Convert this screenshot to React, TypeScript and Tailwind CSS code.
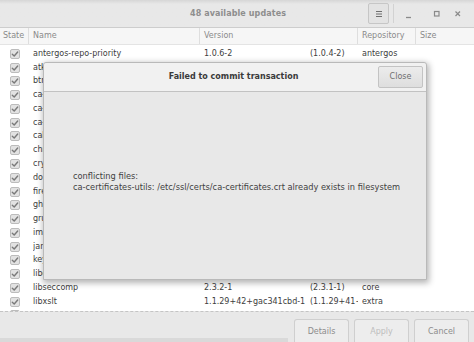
import React from "react";

type Pkg = { name: string; version: string; old: string; repo: string };

const packages: Pkg[] = [
  { name: "antergos-repo-priority", version: "1.0.6-2", old: "(1.0.4-2)", repo: "antergos" },
  { name: "atk", version: "2.26.1-1", old: "(2.26.0-1)", repo: "extra" },
  { name: "btrfs-progs", version: "4.13.3-1", old: "(4.13.2-1)", repo: "core" },
  { name: "ca-certificates", version: "20170307-2", old: "(20170307-1)", repo: "core" },
  { name: "ca-certificates-mozilla", version: "3.34-1", old: "(3.33-1)", repo: "core" },
  { name: "ca-certificates-utils", version: "20170307-2", old: "(20170307-1)", repo: "core" },
  { name: "calibre", version: "3.11.1-1", old: "(3.10.0-1)", repo: "community" },
  { name: "chromium", version: "62.0.3202.89-1", old: "(62.0.3202.75-1)", repo: "extra" },
  { name: "cryptsetup", version: "1.7.5-2", old: "(1.7.5-1)", repo: "core" },
  { name: "dosfstools", version: "4.1-2", old: "(4.1-1)", repo: "core" },
  { name: "firefox", version: "57.0-1", old: "(56.0.2-1)", repo: "extra" },
  { name: "ghc", version: "8.2.1-2", old: "(8.2.1-1)", repo: "community" },
  { name: "grub", version: "2.02-4", old: "(2.02-3)", repo: "core" },
  { name: "imagemagick", version: "7.0.7.10-1", old: "(7.0.7.8-1)", repo: "extra" },
  { name: "jansson", version: "2.10-2", old: "(2.10-1)", repo: "core" },
  { name: "keyutils", version: "1.5.10-2", old: "(1.5.10-1)", repo: "core" },
  { name: "libgcrypt", version: "1.8.1-2", old: "(1.8.1-1)", repo: "core" },
  { name: "libseccomp", version: "2.3.2-1", old: "(2.3.1-1)", repo: "core" },
  { name: "libxslt", version: "1.1.29+42+gac341cbd-1", old: "(1.1.29+41+gfe3a3f5-1)", repo: "extra" },
];

function Check() {
  return (
    <div className="w-[10px] h-[10px] rounded-[2px] border border-[#bcbcbc] bg-[#e2e2e2] flex items-center justify-center">
      <svg width="8" height="8" viewBox="0 0 8 8">
        <path d="M1.3 4.2 L3.2 6 L6.7 2" fill="none" stroke="#7a7a7a" strokeWidth="1.4" strokeLinecap="round" strokeLinejoin="round" />
      </svg>
    </div>
  );
}

function Row({ pkg }: { pkg: Pkg }) {
  return (
    <div className="flex items-center h-[13.78px] shrink-0 text-[8px] text-[#3d3d3d] whitespace-nowrap">
      <div className="w-[33px] flex justify-center pl-[1px] pr-[4px]">
        <Check />
      </div>
      <div className="w-[171px] overflow-hidden">{pkg.name}</div>
      <div className="w-[154px] overflow-hidden flex">
        <span className="min-w-[106px] pr-[3px]">{pkg.version}</span>
        <span>{pkg.old}</span>
      </div>
      <div className="w-[4px]" />
      <div className="w-[58px] overflow-hidden">{pkg.repo}</div>
    </div>
  );
}

function FooterButton({ label, disabled }: { label: string; disabled?: boolean }) {
  return (
    <button
      className={
        "w-[55px] h-[23px] rounded-t-[3px] border border-b-0 border-[#cfcfcf] bg-[#ededed] text-[8px] pt-[1px] " +
        (disabled ? "text-[#bdbdbd]" : "text-[#8c8c8c]")
      }
    >
      {label}
    </button>
  );
}

export default function App() {
  return (
    <div
      className="relative w-[474px] h-[342px] overflow-hidden bg-white flex flex-col"
      style={{ fontFamily: '"DejaVu Sans", sans-serif' }}
    >
      {/* Title bar */}
      <div className="h-[28px] shrink-0 flex items-center bg-gradient-to-b from-[#d6d6d6] via-[#e8e8e8] via-[15%] to-[#e8e8e8] border-b border-[#cdcdcd]">
        <div className="flex-1 text-center text-[8px] font-bold text-[#8e8e8e] tracking-[0.1px] pl-[2px]">
          48 available updates
        </div>
        <div className="absolute left-[368px] top-[3px] w-[21px] h-[21px] rounded-[2px] border border-[#c6c6c6] bg-[#e3e3e3] flex items-center justify-center">
          <svg width="8" height="8" viewBox="0 0 8 8">
            <path d="M1 1.5 H7 M1 4 H7 M1 6.5 H7" stroke="#6e6e6e" strokeWidth="1" />
          </svg>
        </div>
        <div className="absolute left-[393px] top-[4px] w-px h-[19px] bg-[#d2d2d2]" />
        <svg className="absolute left-[405px] top-[11px]" width="8" height="8" viewBox="0 0 8 8">
          <path d="M1 6.5 H6" stroke="#8a8a8a" strokeWidth="1.3" />
        </svg>
        <svg className="absolute left-[433px] top-[10px]" width="8" height="8" viewBox="0 0 8 8">
          <rect x="1.5" y="1.5" width="4.5" height="4.5" fill="none" stroke="#8a8a8a" strokeWidth="1.2" />
        </svg>
        <svg className="absolute left-[454px] top-[10px]" width="8" height="8" viewBox="0 0 8 8">
          <path d="M1.5 1.5 L6 6 M6 1.5 L1.5 6" stroke="#8a8a8a" strokeWidth="1.2" />
        </svg>
      </div>

      {/* Column header */}
      <div className="h-[17px] shrink-0 flex items-center bg-[#f6f6f6] border-b border-[#e4e4e4] text-[8px] text-[#8a8a8a] whitespace-nowrap">
        <div className="w-[29px] pl-[3px] border-r border-[#dedede] h-full flex items-center">State</div>
        <div className="w-[171px] pl-[4px] border-r border-[#dedede] h-full flex items-center">Name</div>
        <div className="w-[158px] pl-[4px] border-r border-[#dedede] h-full flex items-center">Version</div>
        <div className="w-[58px] pl-[4px] border-r border-[#dedede] h-full flex items-center">Repository</div>
        <div className="flex-1 pl-[4px] h-full flex items-center">Size</div>
      </div>

      {/* Rows */}
      <div className="flex-1 overflow-hidden flex flex-col pt-[2px]">
        {packages.map((p) => (
          <Row key={p.name} pkg={p} />
        ))}
        {/* next row, scrolled mostly out of view */}
        <div className="flex items-center h-[13.78px] shrink-0">
          <div className="w-[33px] flex justify-center pl-[1px] pr-[4px]">
            <Check />
          </div>
        </div>
      </div>

      {/* Footer */}
      <div className="h-[31px] shrink-0 relative bg-[#e8e8e8] border-t border-dashed border-[#c4c4c4] flex justify-end items-end gap-[5px] pr-[5px]">
        <FooterButton label="Details" />
        <FooterButton label="Apply" disabled />
        <FooterButton label="Cancel" />
        <div className="absolute left-0 bottom-0 w-[288px] h-[4px] bg-[#d9d9d9]" />
      </div>

      {/* Error dialog */}
      <div className="absolute left-[43px] top-[62px] w-[384px] h-[218px] flex flex-col border border-[#b9b9b9] rounded-t-[3px] bg-[#e8e8e8] shadow-[1px_2px_6px_1px_rgba(0,0,0,0.3)]">
        <div className="h-[29px] shrink-0 flex items-center bg-[#f1f1f1] border-b border-[#c2c2c2] rounded-t-[3px] relative">
          <div className="flex-1 text-center text-[8px] font-bold text-[#3a3a3a] pr-[3px]">
            Failed to commit transaction
          </div>
          <button className="absolute right-[3px] top-[3px] w-[45px] h-[22px] rounded-[2px] border border-[#c3c3c3] bg-gradient-to-b from-[#ececec] to-[#dedede] text-[8px] text-[#6f6f6f]">
            Close
          </button>
        </div>
        <div className="flex-1 pl-[29px] pt-[79px] text-[8.25px] leading-[10.5px] text-[#3f3f3f] whitespace-nowrap">
          <div>conflicting files:</div>
          <div>ca-certificates-utils: /etc/ssl/certs/ca-certificates.crt already exists in filesystem</div>
        </div>
      </div>
    </div>
  );
}
